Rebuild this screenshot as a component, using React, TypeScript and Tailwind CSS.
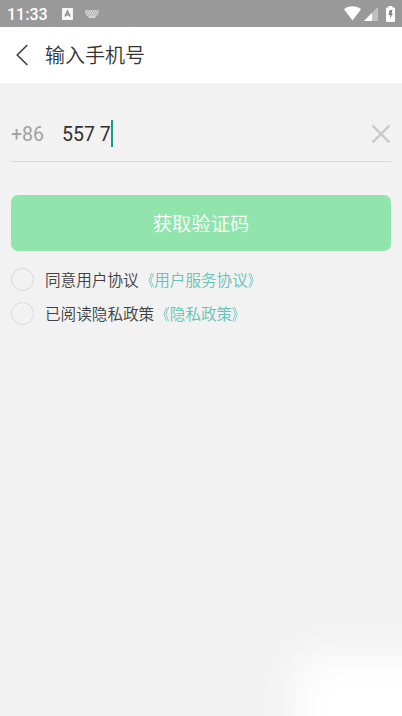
import { useState } from 'react';

const agreements = [
  { id: 'service', label: '同意用户协议', link: '用户服务协议' },
  { id: 'privacy', label: '已阅读隐私政策', link: '隐私政策' },
];

function StatusBar() {
  return (
    <div className="flex h-[27px] items-center bg-[#999999] pl-[7px] pr-[7px] text-white">
      <span className="w-[55px] pt-0.5 font-['Roboto'] text-[16px] font-medium leading-none">11:33</span>
      <svg className="h-3 w-[11px]" viewBox="0 0 11 12">
        <rect width="11" height="12" rx="1" fill="#f7f7f7" />
        <path d="M3 8.5 5.5 3 8 8.5M4 6.8h3" fill="none" stroke="#8c8c8c" strokeWidth="1.5" />
      </svg>
      <svg className="ml-3 h-2 w-3.5" viewBox="0 0 14 8" fill="none" stroke="#e6e6e6">
        <path d="M0 1h14M.5 3h13M1.5 5h11" strokeWidth="1.3" strokeDasharray="1.5 .5" />
        <path d="M3.5 7h7" strokeWidth="1.6" />
      </svg>
      <svg className="ml-auto h-[15px] w-[17px]" viewBox="0 0 17 15" fill="#fff">
        <path d="M0 3.2C4.8-.6 12.2-.6 17 3.2L8.5 14.5z" />
      </svg>
      <svg className="ml-[3px] h-3.5 w-3.5" viewBox="0 0 14 14">
        <path d="M14 0v14H0z" fill="#c0c0c0" />
        <path d="M8 6v8H0z" fill="#fff" />
      </svg>
      <svg className="ml-2 h-4 w-[9px]" viewBox="0 0 9 16">
        <path d="M2.5 0h4v1.5H8a1 1 0 0 1 1 1V15a1 1 0 0 1-1 1H1a1 1 0 0 1-1-1V2.5a1 1 0 0 1 1-1h1.5z" fill="#fff" />
        <path d="M3.5 4h3L5.6 7.5h1.3L4 13l.5-4H2.5z" fill="#858585" />
      </svg>
    </div>
  );
}

export default function App() {
  const [checked, setChecked] = useState<string[]>([]);

  const toggle = (id: string) => {
    setChecked((prev) => (prev.includes(id) ? prev.filter((item) => item !== id) : [...prev, id]));
  };

  return (
    <div className="relative h-[716px] w-full overflow-hidden bg-[#f2f2f2] font-['Roboto','Noto_Sans_CJK_SC',sans-serif]">
      <StatusBar />

      <header className="flex h-14 items-center bg-white pl-4">
        <svg className="h-[22px] w-3" viewBox="0 0 12 22" fill="none" stroke="#444" strokeWidth="1.7">
          <path d="M11.3 1 1.3 11l10 10" />
        </svg>
        <h1 className="ml-[17px] pt-px text-[20px] font-[350] leading-7 text-[#333]">输入手机号</h1>
      </header>

      <main className="px-[11px] pt-[23px]">
        <div className="flex h-14 items-center border-b border-[#d8d8d8] text-[19.5px]">
          <span className="w-[51px] pt-0.5 text-[#a0a0a0]">+86</span>
          <span className="pt-0.5 text-[#303030]">557 7</span>
          <span className="h-[27px] w-[2px] bg-[#179b8a]" />
          <svg className="ml-auto mr-px h-[18px] w-[18px]" viewBox="0 0 18 18" stroke="#c9c9cb" strokeWidth="2.3">
            <path d="m.5.5 17 17M17.5.5l-17 17" />
          </svg>
        </div>

        <button className="mt-[33px] block h-14 w-full rounded-[7px] bg-[#90e4ac] pt-1 text-[19.3px] font-[350] text-white">
          获取验证码
        </button>

        <div className="mt-[11px] text-[15.6px] font-[350] text-[#404040]">
          {agreements.map(({ id, label, link }) => (
            <div key={id} className="flex h-[34px] items-center">
              <button
                aria-label={label}
                onClick={() => toggle(id)}
                className={`mr-[11px] h-[23px] w-[23px] rounded-full border ${
                  checked.includes(id) ? 'border-[#90e4ac] bg-[#90e4ac]' : 'border-[#d9d9d9]'
                }`}
              />
              <span className="pt-[5px]">{label}</span>
              <span className="pt-[5px] text-[#65c2b7]">
                <span className="inline-block origin-right scale-x-[.8]">《</span>
                {link}
                <span className="inline-block origin-left scale-x-[.75]">》</span>
              </span>
            </div>
          ))}
        </div>
      </main>

      <div className="pointer-events-none absolute -bottom-20 -right-20 h-[139px] w-[185px] bg-white blur-[20px]" />
    </div>
  );
}
